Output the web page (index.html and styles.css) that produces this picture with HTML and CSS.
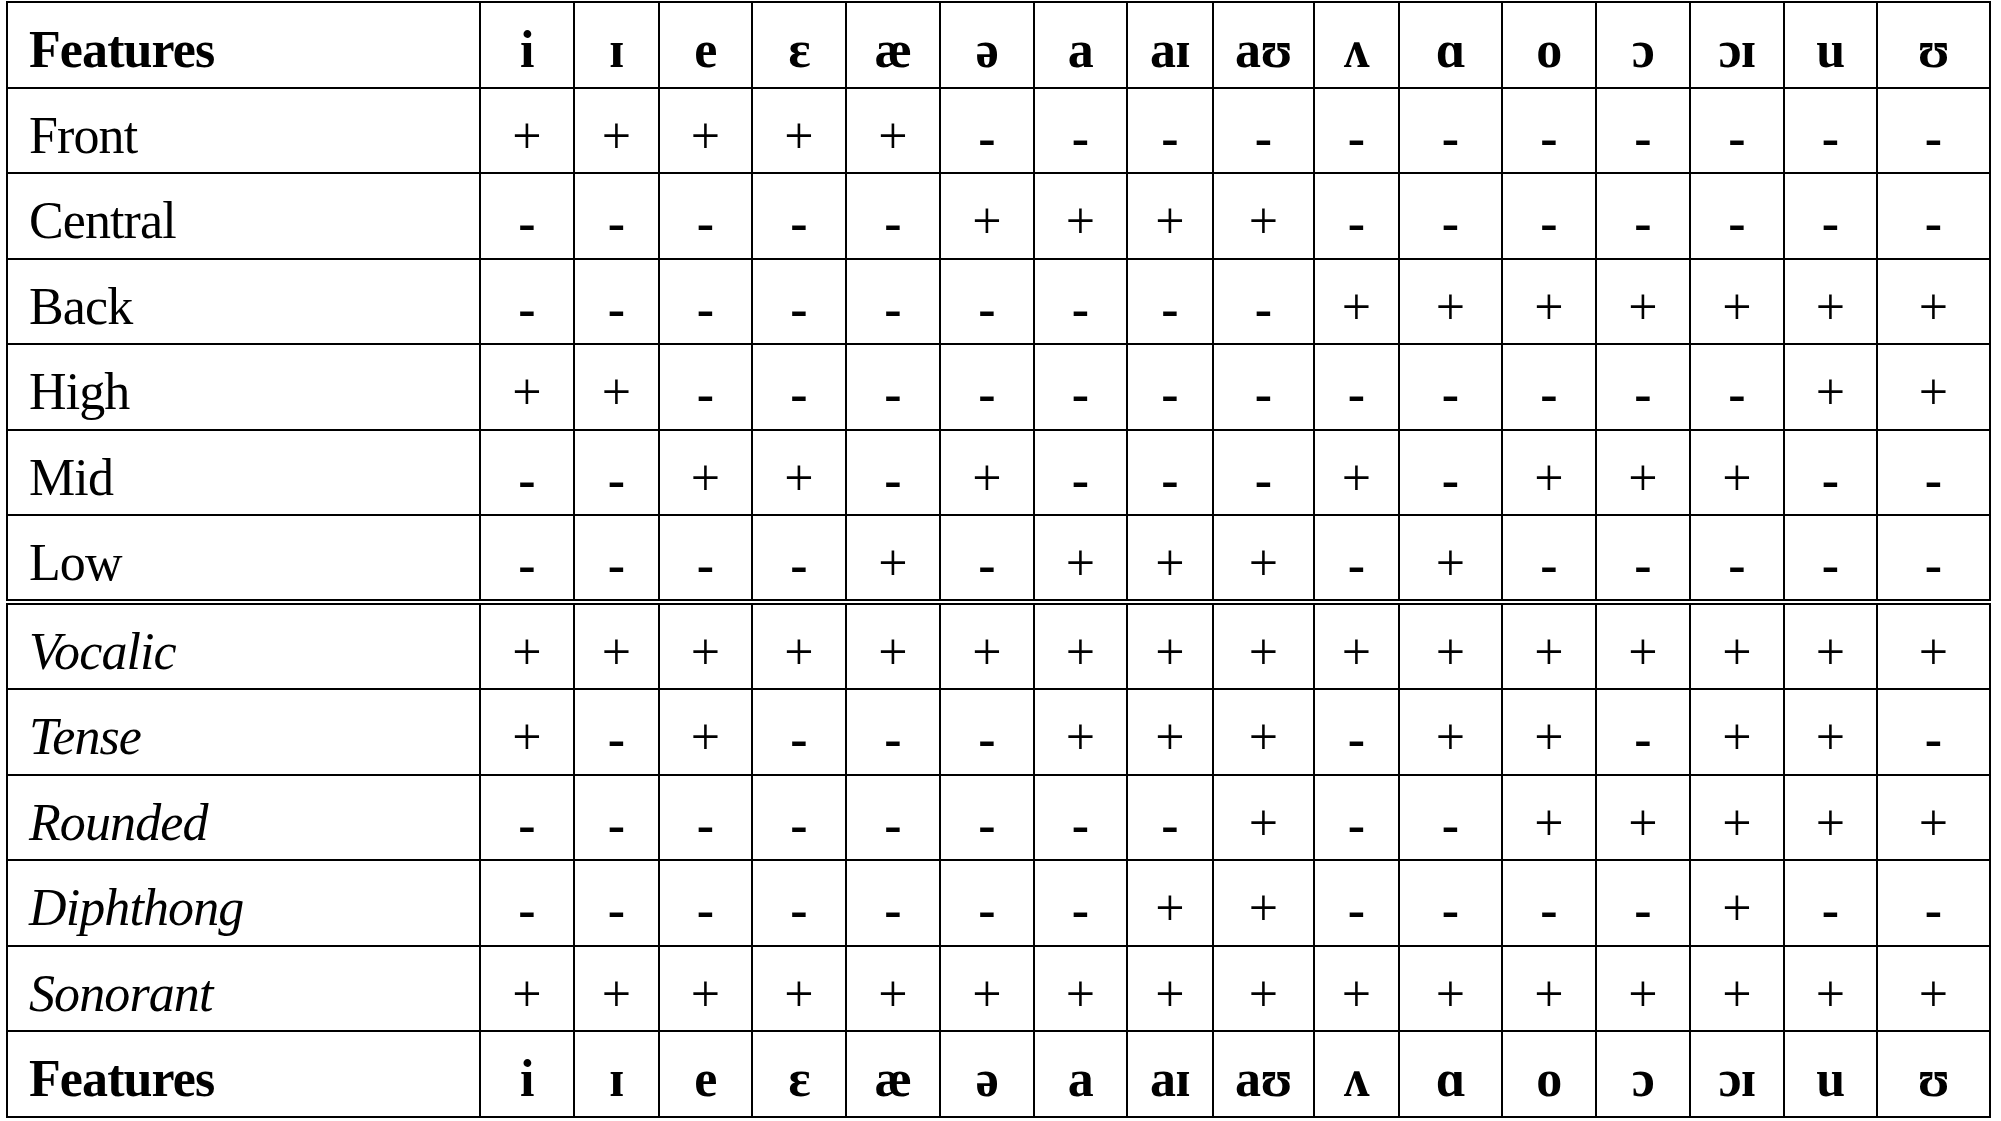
FILE: index.html
```html
<!DOCTYPE html>
<html lang="en">
<head>
<meta charset="utf-8">
<title>Vowel features</title>
<link rel="stylesheet" href="styles.css">
</head>
<body>
<table class="features">
  <colgroup>
    <col class="c-label">
    <col class="c94"><col class="c85"><col class="c93"><col class="c94"><col class="c94"><col class="c94"><col class="c93"><col class="c86"><col class="c101"><col class="c85"><col class="c103"><col class="c94"><col class="c94"><col class="c94"><col class="c93"><col class="c113">
  </colgroup>
  <thead>
    <tr class="head">
      <th class="label">Features</th>
      <th>i</th><th>ɪ</th><th>e</th><th>ɛ</th><th>æ</th><th>ə</th><th>a</th><th>aɪ</th><th>aʊ</th><th>ʌ</th><th>ɑ</th><th>o</th><th>ɔ</th><th>ɔɪ</th><th>u</th><th>ʊ</th>
    </tr>
  </thead>
  <tbody>
    <tr><td class="label">Front</td><td>+</td><td>+</td><td>+</td><td>+</td><td>+</td><td class="m">-</td><td class="m">-</td><td class="m">-</td><td class="m">-</td><td class="m">-</td><td class="m">-</td><td class="m">-</td><td class="m">-</td><td class="m">-</td><td class="m">-</td><td class="m">-</td></tr>
    <tr><td class="label">Central</td><td class="m">-</td><td class="m">-</td><td class="m">-</td><td class="m">-</td><td class="m">-</td><td>+</td><td>+</td><td>+</td><td>+</td><td class="m">-</td><td class="m">-</td><td class="m">-</td><td class="m">-</td><td class="m">-</td><td class="m">-</td><td class="m">-</td></tr>
    <tr><td class="label">Back</td><td class="m">-</td><td class="m">-</td><td class="m">-</td><td class="m">-</td><td class="m">-</td><td class="m">-</td><td class="m">-</td><td class="m">-</td><td class="m">-</td><td>+</td><td>+</td><td>+</td><td>+</td><td>+</td><td>+</td><td>+</td></tr>
    <tr><td class="label">High</td><td>+</td><td>+</td><td class="m">-</td><td class="m">-</td><td class="m">-</td><td class="m">-</td><td class="m">-</td><td class="m">-</td><td class="m">-</td><td class="m">-</td><td class="m">-</td><td class="m">-</td><td class="m">-</td><td class="m">-</td><td>+</td><td>+</td></tr>
    <tr><td class="label">Mid</td><td class="m">-</td><td class="m">-</td><td>+</td><td>+</td><td class="m">-</td><td>+</td><td class="m">-</td><td class="m">-</td><td class="m">-</td><td>+</td><td class="m">-</td><td>+</td><td>+</td><td>+</td><td class="m">-</td><td class="m">-</td></tr>
    <tr class="low"><td class="label">Low</td><td class="m">-</td><td class="m">-</td><td class="m">-</td><td class="m">-</td><td>+</td><td class="m">-</td><td>+</td><td>+</td><td>+</td><td class="m">-</td><td>+</td><td class="m">-</td><td class="m">-</td><td class="m">-</td><td class="m">-</td><td class="m">-</td></tr>
    <tr class="vocalic"><td class="label it">Vocalic</td><td>+</td><td>+</td><td>+</td><td>+</td><td>+</td><td>+</td><td>+</td><td>+</td><td>+</td><td>+</td><td>+</td><td>+</td><td>+</td><td>+</td><td>+</td><td>+</td></tr>
    <tr><td class="label it">Tense</td><td>+</td><td class="m">-</td><td>+</td><td class="m">-</td><td class="m">-</td><td class="m">-</td><td>+</td><td>+</td><td>+</td><td class="m">-</td><td>+</td><td>+</td><td class="m">-</td><td>+</td><td>+</td><td class="m">-</td></tr>
    <tr><td class="label it">Rounded</td><td class="m">-</td><td class="m">-</td><td class="m">-</td><td class="m">-</td><td class="m">-</td><td class="m">-</td><td class="m">-</td><td class="m">-</td><td>+</td><td class="m">-</td><td class="m">-</td><td>+</td><td>+</td><td>+</td><td>+</td><td>+</td></tr>
    <tr><td class="label it">Diphthong</td><td class="m">-</td><td class="m">-</td><td class="m">-</td><td class="m">-</td><td class="m">-</td><td class="m">-</td><td class="m">-</td><td>+</td><td>+</td><td class="m">-</td><td class="m">-</td><td class="m">-</td><td class="m">-</td><td>+</td><td class="m">-</td><td class="m">-</td></tr>
    <tr><td class="label it">Sonorant</td><td>+</td><td>+</td><td>+</td><td>+</td><td>+</td><td>+</td><td>+</td><td>+</td><td>+</td><td>+</td><td>+</td><td>+</td><td>+</td><td>+</td><td>+</td><td>+</td></tr>
  </tbody>
  <tfoot>
    <tr class="head">
      <th class="label">Features</th>
      <th>i</th><th>ɪ</th><th>e</th><th>ɛ</th><th>æ</th><th>ə</th><th>a</th><th>aɪ</th><th>aʊ</th><th>ʌ</th><th>ɑ</th><th>o</th><th>ɔ</th><th>ɔɪ</th><th>u</th><th>ʊ</th>
    </tr>
  </tfoot>
</table>
</body>
</html>
```

FILE: styles.css
```css
html, body {
  margin: 0;
  padding: 0;
  background: #ffffff;
}

body {
  font-family: "Liberation Serif", "DejaVu Serif", serif;
  color: #000000;
}

.features {
  border-collapse: collapse;
  table-layout: fixed;
  width: 1983px;
  margin: 1px 0 0 6px;
  font-size: 52px;
  line-height: 52px;
}

.c-label { width: 473px; }
.c85 { width: 85px; }
.c86 { width: 86px; }
.c93 { width: 93px; }
.c94 { width: 94px; }
.c101 { width: 101px; }
.c103 { width: 103px; }
.c113 { width: 113px; }

.features tr {
  height: 85.5px;
}

.features tr.low {
  height: 86.5px;
}

.features tr.vocalic {
  height: 87.5px;
}

.features th,
.features td {
  border: 2px solid #000000;
  padding: 21px 0 0 0;
  vertical-align: top;
  text-align: center;
  font-weight: normal;
  white-space: nowrap;
}

.features th {
  font-weight: bold;
  letter-spacing: -0.5px;
}

.features .label {
  text-align: left;
  padding-left: 21px;
  letter-spacing: -0.9px;
}

.features .it {
  font-style: italic;
}

.features .m {
  font-weight: bold;
  padding-top: 23px;
}

.features tr.low td {
  border-bottom: 6px double #000000;
}
```
